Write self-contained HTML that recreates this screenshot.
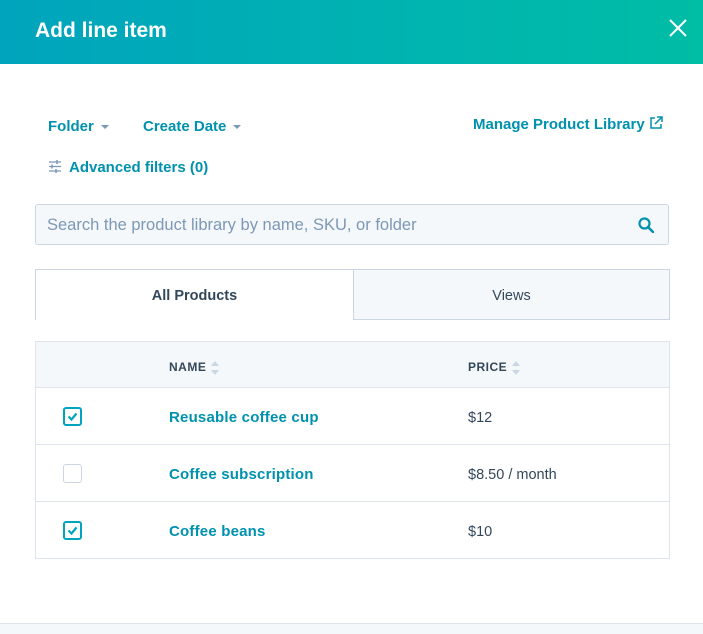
<!DOCTYPE html><html><head><style>
body{margin:0;width:703px;height:633px;overflow:hidden;background:#fff;font-family:"Liberation Sans",sans-serif;position:relative}
.hd{position:absolute;left:0;top:0;width:703px;height:64px;background:linear-gradient(90deg,#00a4bd,#00b4b0 60%,#00bda5)}
.hd h1{position:absolute;left:35px;top:19px;margin:0;font-size:21px;color:#fff;font-weight:bold}
.a{position:absolute;color:#0091ae;font-weight:bold;font-size:15px}
.car{display:inline-block;border-left:4px solid transparent;border-right:4px solid transparent;border-top:4px solid #7c98b6;vertical-align:middle;margin-left:7px}
.search{position:absolute;left:35px;top:204px;width:632px;height:39px;background:#f5f8fa;border:1px solid #cbd6e2;border-radius:3px}
.search span{position:absolute;left:11px;top:11px;font-size:16.5px;color:#7c98b6}
.tabs{position:absolute;left:35px;top:269px;width:633px;height:50px;border:1px solid #cbd6e2;border-bottom:none}
.t1{position:absolute;left:0;top:0;width:317px;height:51px;background:#fff;text-align:center;line-height:52px;font-size:14.5px;color:#33475b;font-weight:bold}
.t2{position:absolute;left:317px;top:0;width:316px;height:50px;background:#f5f8fa;border-left:1px solid #cbd6e2;border-bottom:1px solid #cbd6e2;text-align:center;line-height:52px;font-size:14.5px;color:#33475b;box-sizing:border-box}
.tbl{position:absolute;left:35px;top:341px;width:633px;height:216px;border:1px solid #dfe3eb}
.th{position:absolute;left:0;top:0;width:633px;height:45px;background:#f5f8fa;border-bottom:1px solid #dfe3eb}
.hl{position:absolute;top:18px;font-size:12px;font-weight:bold;color:#33475b;letter-spacing:.5px}
.row{position:absolute;left:0;width:633px;height:56px;border-bottom:1px solid #dfe3eb}
.cb{position:absolute;left:27px;top:19px;width:19px;height:19px;border:2px solid #00a4bd;border-radius:3px;box-sizing:border-box}
.cb svg{position:absolute;left:1px;top:1px}
.cb.off{border-color:#cbd6e2;border-width:1.5px}
.nm{position:absolute;left:133px;top:21px;font-size:15px;font-weight:bold;color:#0091ae;letter-spacing:.2px}
.pr{position:absolute;left:432px;top:22px;font-size:14.5px;color:#33475b}
.sort{display:inline-block;vertical-align:middle;margin-left:5px;width:8px;height:14px;position:relative}
.sort:before,.sort:after{content:"";position:absolute;left:0;border-left:4px solid transparent;border-right:4px solid transparent}
.sort:before{top:0;border-bottom:5px solid #cbd6e2}.sort:after{bottom:0;border-top:5px solid #cbd6e2}
.ft{position:absolute;left:0;top:623px;width:703px;height:10px;background:#f5f8fa;border-top:1px solid #dfe3eb}
</style></head><body>
<div class="hd"><h1>Add line item</h1>
<svg style="position:absolute;left:669px;top:19px" width="18" height="18"><path d="M1 1L17 17M17 1L1 17" stroke="#fff" stroke-width="2"/></svg></div>
<div class="a" style="left:48px;top:118px">Folder<span class="car"></span></div>
<div class="a" style="left:143px;top:118px">Create Date<span class="car"></span></div>
<div class="a" style="left:473px;top:116px">Manage Product Library
<svg width="14" height="14" style="vertical-align:-1px" viewBox="0 0 14 14"><path d="M6 2H2v10h10V8M8 1h5v5M13 1L6 8" stroke="#0091ae" stroke-width="1.5" fill="none"/></svg></div>
<div class="a" style="left:48px;top:159px"><svg width="14" height="13" style="vertical-align:-1px;margin-right:7px" viewBox="0 0 14 13"><path d="M1 2h12M1 6.5h12M1 11h12" stroke="#7c98b6" stroke-width="1.3"/><path d="M9 0v4M4 4.5v4M8 9v4" stroke="#7c98b6" stroke-width="1.5"/></svg>Advanced filters (0)</div>
<div class="search"><span>Search the product library by name, SKU, or folder</span>
<svg style="position:absolute;left:602px;top:12px" width="16" height="16" viewBox="0 0 16 16"><circle cx="6.5" cy="6.5" r="5" stroke="#0091ae" stroke-width="2.2" fill="none"/><path d="M10 10L15 15" stroke="#0091ae" stroke-width="2.5" stroke-linecap="round"/></svg></div>
<div class="tabs"><div class="t1">All Products</div><div class="t2">Views</div></div>
<div class="tbl">
<div class="th"><span class="hl" style="left:133px">NAME<span class="sort"></span></span><span class="hl" style="left:432px">PRICE<span class="sort"></span></span></div>
<div class="row" style="top:46px"><div class="cb"><svg width="13" height="13" viewBox="0 0 13 13"><path d="M2.5 6.5l3 3 5-6" stroke="#00a4bd" stroke-width="2.2" fill="none"/></svg></div><div class="nm">Reusable coffee cup</div><div class="pr">$12</div></div>
<div class="row" style="top:103px"><div class="cb off"></div><div class="nm">Coffee subscription</div><div class="pr">$8.50 / month</div></div>
<div class="row" style="top:160px;border-bottom:none"><div class="cb"><svg width="13" height="13" viewBox="0 0 13 13"><path d="M2.5 6.5l3 3 5-6" stroke="#00a4bd" stroke-width="2.2" fill="none"/></svg></div><div class="nm">Coffee beans</div><div class="pr">$10</div></div>
</div>
<div class="ft"></div>
</body></html>
